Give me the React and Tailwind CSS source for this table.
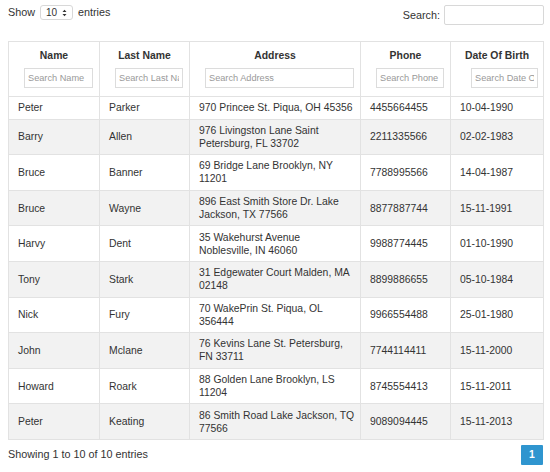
import React from 'react';

const people = [
  ['Peter', 'Parker', '970 Princee St. Piqua, OH 45356', '4455664455', '10-04-1990'],
  ['Barry', 'Allen', '976 Livingston Lane Saint Petersburg, FL 33702', '2211335566', '02-02-1983'],
  ['Bruce', 'Banner', '69 Bridge Lane Brooklyn, NY 11201', '7788995566', '14-04-1987'],
  ['Bruce', 'Wayne', '896 East Smith Store Dr. Lake Jackson, TX 77566', '8877887744', '15-11-1991'],
  ['Harvy', 'Dent', '35 Wakehurst Avenue Noblesville, IN 46060', '9988774445', '01-10-1990'],
  ['Tony', 'Stark', '31 Edgewater Court Malden, MA 02148', '8899886655', '05-10-1984'],
  ['Nick', 'Fury', '70 WakePrin St. Piqua, OL 356444', '9966554488', '25-01-1980'],
  ['John', 'Mclane', '76 Kevins Lane St. Petersburg, FN 33711', '7744114411', '15-11-2000'],
  ['Howard', 'Roark', '88 Golden Lane Brooklyn, LS 11204', '8745554413', '15-11-2011'],
  ['Peter', 'Keating', '86 Smith Road Lake Jackson, TQ 77566', '9089094445', '15-11-2013'],
];

const columns = [
  { title: 'Name', placeholder: 'Search Name', width: 'w-[91px]' },
  { title: 'Last Name', placeholder: 'Search Last Name', width: 'w-[90px]' },
  { title: 'Address', placeholder: 'Search Address', width: 'w-[171px]' },
  { title: 'Phone', placeholder: 'Search Phone', width: 'w-[90px]' },
  { title: 'Date Of Birth', placeholder: 'Search Date Of Birth', width: 'w-[93px]' },
];

function App() {
  return (
    <div
      className="w-[550px] h-[472px] bg-white text-[#333] text-[10.4px] leading-[13px] overflow-hidden"
      style={{ fontFamily: '"Liberation Sans", Arial, sans-serif' }}
    >
      {/* Top controls */}
      <div className="flex items-start justify-between pl-[8px] pr-[6px] pt-[5px] h-[41px]">
        <div className="flex items-center gap-[5px] h-[15px] text-[10.8px]">
          <span>Show</span>
          <div className="flex items-center justify-between w-[33px] h-[15px] px-[5px] border border-[#d8d8d8] rounded-[3px] bg-white">
            <span className="text-[10px]">10</span>
            <svg width="5" height="8" viewBox="0 0 5 8">
              <path d="M0.5 3 L2.5 0.8 L4.5 3 Z M0.5 5 L2.5 7.2 L4.5 5 Z" fill="#333" />
            </svg>
          </div>
          <span>entries</span>
        </div>
        <div className="flex items-center gap-[4px] text-[10.8px]">
          <span>Search:</span>
          <input className="w-[100px] h-[20px] border border-[#d8d8d8] rounded-[2px] outline-none" />
        </div>
      </div>

      {/* Table */}
      <table className="ml-[8px] w-[535px] table-fixed border-collapse border border-[#e2e2e2] border-b-[#9a9a9a]">
        <colgroup>
          {columns.map((c) => (
            <col key={c.title} className={c.width} />
          ))}
        </colgroup>
        <thead>
          <tr>
            {columns.map((c, i) => (
              <th
                key={c.title}
                className="border border-[#e2e2e2] px-[6px] pt-[7px] pb-[8px] align-top font-bold text-center"
              >
                <div className="text-center">{c.title}</div>
                <input
                  placeholder={c.placeholder}
                  className={`mt-[6px] h-[20px] border border-[#dcdcdc] px-[3px] text-[9.2px] font-normal outline-none placeholder:text-[#999] ${
                    i === 4 ? 'ml-[14px] w-[67px]' : 'ml-[9px] w-[calc(100%-9px)]'
                  }`}
                />
              </th>
            ))}
          </tr>
        </thead>
        <tbody>
          {people.map((p, r) => (
            <tr key={r} className={r % 2 === 1 ? 'bg-[#f2f2f2]' : 'bg-white'}>
              {p.map((v, i) => (
                <td
                  key={i}
                  className={`border border-[#e2e2e2] py-[4.3px] pl-[9px] align-middle ${i === 2 ? 'pr-[5px]' : 'pr-[6px]'}`}
                >
                  {v}
                </td>
              ))}
            </tr>
          ))}
        </tbody>
      </table>

      {/* Footer */}
      <div className="flex items-center justify-between pl-[8px] pr-[7px] mt-[5px]">
        <span className="text-[10.8px]">Showing 1 to 10 of 10 entries</span>
        <button className="w-[22px] h-[20px] bg-[#2f95cf] text-white text-[10.4px] font-bold rounded-[1px]">
          1
        </button>
      </div>
    </div>
  );
}

export default App;
